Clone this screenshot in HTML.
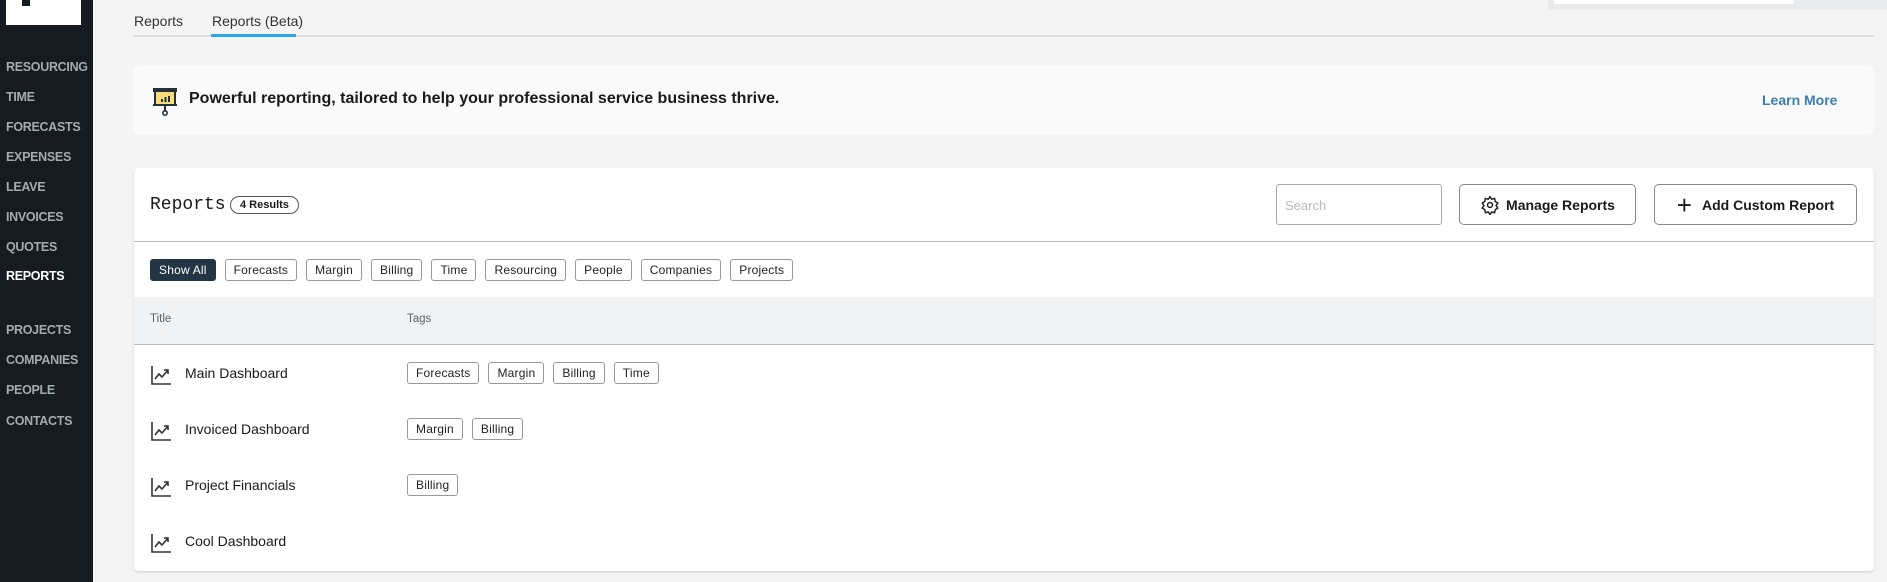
<!DOCTYPE html>
<html><head><meta charset="utf-8"><style>
*{box-sizing:border-box;margin:0;padding:0}
body{width:1887px;height:582px;overflow:hidden;background:#f4f4f4;font-family:"Liberation Sans",sans-serif;color:#1a1a1a;position:relative}
.sb{position:absolute;left:0;top:0;width:93px;height:582px;background:#151b20}
.logo{position:absolute;left:6px;top:0;width:75px;height:25px;background:#fff}
.logo i{position:absolute;left:16px;top:0;width:8px;height:6px;background:#151b20}
.nav{position:absolute;left:6px;font-size:12.5px;font-weight:bold;color:#a3aab2;letter-spacing:-0.3px}
.nav.a{color:#fff}
.tab{position:absolute;top:13px;font-size:14px;color:#333}
.line{position:absolute;left:133px;top:35px;width:1741px;height:2px;background:#dedede}
.ul{position:absolute;left:211px;top:34px;width:85px;height:3px;background:#2aa8f0}
.tr{position:absolute;left:1548px;top:0;width:339px;height:10px;background:#e9eaec}
.tr i{position:absolute;left:6px;top:0;width:240px;height:4px;background:#fff}
.banner{position:absolute;left:133px;top:65px;width:1741px;height:70px;background:#fafafa;border-radius:6px}
.banner b{position:absolute;left:56px;top:25px;font-size:16px}
.lm{position:absolute;left:1629px;top:27px;font-size:14px;color:#3a7fae;font-weight:bold}
.card{position:absolute;left:134px;top:168px;width:1740px;height:403px;background:#fff;border-radius:4px;box-shadow:0 1px 2px rgba(0,0,0,.15)}
.hdr{position:absolute;left:0;top:0;width:100%;height:74px;border-bottom:1px solid #b7bcc1}
.ttl{position:absolute;left:16px;top:27px;font-family:"Liberation Mono",monospace;font-size:18px}
.badge{position:absolute;left:96px;top:28px;height:18px;padding:0 9px;border:1px solid #555;border-radius:9px;font-size:11px;font-weight:bold;line-height:16px}
.inp{position:absolute;left:1142px;top:16px;width:166px;height:41px;border:1px solid #aaa;border-radius:3px;font-size:13px;color:#bbb;padding:13px 8px}
.btn{position:absolute;top:16px;height:41px;border:1px solid #888;border-radius:5px;font-size:14px;font-weight:bold;display:flex;align-items:center;justify-content:center;gap:6px}
.chips{position:absolute;top:91px;left:16px;display:flex;gap:9px}
.chip{height:22px;padding:0 8px;border:1px solid #999;border-radius:3px;font-size:12px;line-height:20px;color:#222;white-space:nowrap;letter-spacing:0.2px}
.chip.d{background:#233444;color:#fff;border-color:#233444}
.th{position:absolute;left:0;top:129px;width:100%;height:48px;background:#f1f2f3;border-bottom:1px solid #b7bcc1;font-size:11.5px;color:#5a6670}
.th span{position:absolute;top:16px}
.row{position:absolute;left:0;width:100%;height:24px}
.row svg{position:absolute;left:16px;top:2px}
.row .n{position:absolute;left:51px;top:3px;font-size:14px}
.row .tg{position:absolute;left:273px;top:0;display:flex;gap:9px}
</style></head><body>
<div class="sb"><div class="logo"><i></i></div>
<div class="nav" style="top:60px">RESOURCING</div>
<div class="nav" style="top:90px">TIME</div>
<div class="nav" style="top:120px">FORECASTS</div>
<div class="nav" style="top:150px">EXPENSES</div>
<div class="nav" style="top:180px">LEAVE</div>
<div class="nav" style="top:210px">INVOICES</div>
<div class="nav" style="top:240px">QUOTES</div>
<div class="nav a" style="top:269px">REPORTS</div>
<div class="nav" style="top:323px">PROJECTS</div>
<div class="nav" style="top:353px">COMPANIES</div>
<div class="nav" style="top:383px">PEOPLE</div>
<div class="nav" style="top:414px">CONTACTS</div>
</div>
<div class="tr"><i></i></div>
<div class="tab" style="left:134px">Reports</div>
<div class="tab" style="left:212px">Reports (Beta)</div>
<div class="line"></div><div class="ul"></div>
<div class="banner">
<svg style="position:absolute;left:19px;top:22px" width="26" height="30" viewBox="0 0 26 30"><rect x="3" y="4" width="20" height="14" fill="#f6dd7a" stroke="#24313d" stroke-width="2"/><rect x="1" y="1" width="24" height="4" fill="#24313d"/><line x1="1" y1="18" x2="25" y2="18" stroke="#24313d" stroke-width="2"/><line x1="13" y1="18" x2="13" y2="24" stroke="#24313d" stroke-width="2"/><circle cx="13" cy="26" r="2.2" fill="none" stroke="#24313d" stroke-width="1.6"/><rect x="9" y="12" width="2" height="3" fill="#24313d"/><rect x="12.5" y="10" width="2" height="5" fill="#24313d"/><rect x="16" y="9" width="2" height="6" fill="#24313d"/></svg>
<b>Powerful reporting, tailored to help your professional service business thrive.</b>
<span class="lm">Learn More</span></div>
<div class="card">
<div class="hdr"><span class="ttl">Reports</span><span class="badge">4 Results</span>
<div class="inp">Search</div>
<div class="btn" style="left:1325px;width:177px"><svg width="20" height="20" viewBox="0 0 24 24" fill="none" stroke="#222" stroke-width="1.8"><circle cx="12" cy="12" r="3"/><path d="M12 2l2 3 3.5-.8.8 3.5 3 2-2 3 2 3-3 2-.8 3.5-3.5-.8-2 3-2-3-3.5.8-.8-3.5-3-2 2-3-2-3 3-2 .8-3.5 3.5.8z"/></svg>Manage Reports</div>
<div class="btn" style="left:1520px;width:203px"><span style="font-size:26px;font-weight:normal;line-height:20px;margin-right:4px">+</span>Add Custom Report</div>
</div>
<div class="chips"><span class="chip d">Show All</span><span class="chip">Forecasts</span><span class="chip">Margin</span><span class="chip">Billing</span><span class="chip">Time</span><span class="chip">Resourcing</span><span class="chip">People</span><span class="chip">Companies</span><span class="chip">Projects</span></div>
<div class="th"><span style="left:16px">Title</span><span style="left:273px">Tags</span></div>
<div class="row" style="top:194px"><svg width="22" height="22" viewBox="0 0 22 22" fill="none" stroke="#333" stroke-width="1.6"><path d="M2 2v18h19"/><path d="M5 15l4-5 3 3 6-7M14 6h4v4"/></svg><span class="n">Main Dashboard</span><div class="tg"><span class="chip">Forecasts</span><span class="chip">Margin</span><span class="chip">Billing</span><span class="chip">Time</span></div></div>
<div class="row" style="top:250px"><svg width="22" height="22" viewBox="0 0 22 22" fill="none" stroke="#333" stroke-width="1.6"><path d="M2 2v18h19"/><path d="M5 15l4-5 3 3 6-7M14 6h4v4"/></svg><span class="n">Invoiced Dashboard</span><div class="tg"><span class="chip">Margin</span><span class="chip">Billing</span></div></div>
<div class="row" style="top:306px"><svg width="22" height="22" viewBox="0 0 22 22" fill="none" stroke="#333" stroke-width="1.6"><path d="M2 2v18h19"/><path d="M5 15l4-5 3 3 6-7M14 6h4v4"/></svg><span class="n">Project Financials</span><div class="tg"><span class="chip">Billing</span></div></div>
<div class="row" style="top:362px"><svg width="22" height="22" viewBox="0 0 22 22" fill="none" stroke="#333" stroke-width="1.6"><path d="M2 2v18h19"/><path d="M5 15l4-5 3 3 6-7M14 6h4v4"/></svg><span class="n">Cool Dashboard</span></div>
</div>
</body></html>
